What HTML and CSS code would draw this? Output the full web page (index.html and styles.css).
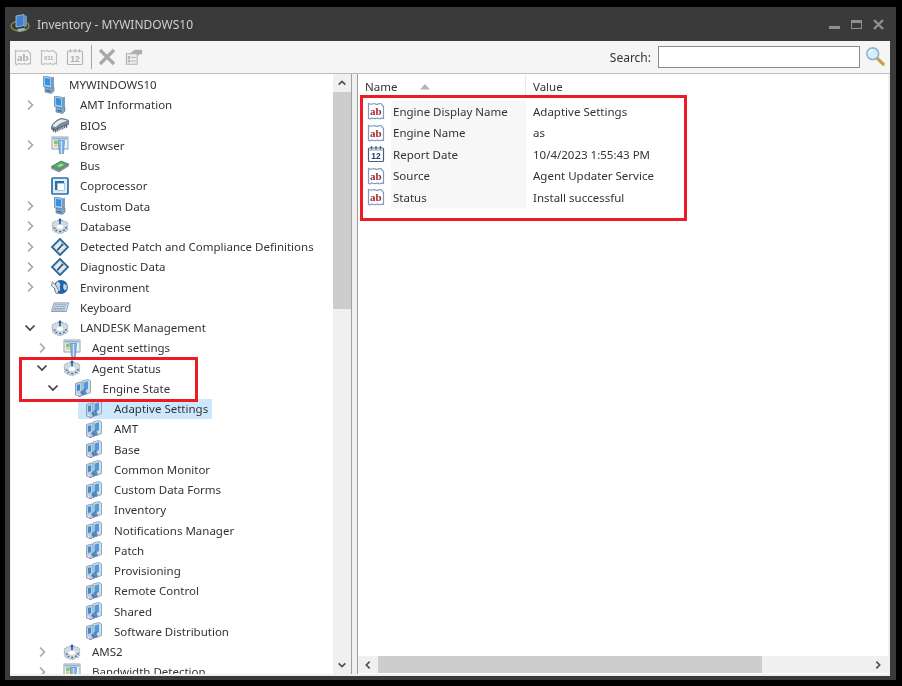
FILE: index.html
```html
<!DOCTYPE html>
<html lang="en">
<head>
<meta charset="utf-8">
<title>Inventory - MYWINDOWS10</title>
<link rel="stylesheet" href="styles.css">
</head>
<body>
<svg class="defs" width="0" height="0" aria-hidden="true">
  <defs>
    <symbol id="i-ab" viewBox="0 0 18 18">
      <path d="M1.500 1.500c2 1 3.500 1 5.500 0 2 1 4 1 5.500 0l1.500 0 2.500 3v12l-1.500-.5c-1.500 1-3 1-4.500 0-2 1-3.500 1-5.500 0-1.500 1-2.500 1-3.500.5z" fill="#fff" stroke="#7f9cc0" stroke-width="1.200"/>
      <text x="8.800" y="12.600" text-anchor="middle" class="ab">ab</text>
    </symbol>
    <symbol id="i-ab-off" viewBox="0 0 18 18">
      <path d="M1.500 2.500c2 1 3.500 1 5.500 0 2 1 4 1 5.500 0l1 0 3 3v10.500l-1.500-.5c-1.500 1-3 1-4.500 0-2 1-3.500 1-5.500 0-1.500 1-2.500 1-3.500.5z" fill="#f4f4f4" stroke="#bdbdbd" stroke-width="1.200"/>
      <text x="8.800" y="12.800" text-anchor="middle" class="ab off">ab</text>
    </symbol>
    <symbol id="i-bin-off" viewBox="0 0 18 18">
      <path d="M1.500 2.500c2 1 3.500 1 5.500 0 2 1 4 1 5.500 0l1 0 3 3v10.500l-1.500-.5c-1.500 1-3 1-4.500 0-2 1-3.500 1-5.500 0-1.500 1-2.500 1-3.500.5z" fill="#f4f4f4" stroke="#bdbdbd" stroke-width="1.200"/>
      <text x="8.800" y="11.500" text-anchor="middle" class="bin">011</text>
    </symbol>
    <symbol id="i-date" viewBox="0 0 18 18">
      <rect x="1.500" y="3" width="15" height="13.500" rx="1" fill="#fff" stroke="#4d6078" stroke-width="1.200"/>
      <rect x="2" y="3.500" width="14" height="2.500" fill="#c3d0de"/>
      <path d="M4.500 1v3.500M9 1v3.500M13.500 1v3.500" stroke="#4d6078" stroke-width="1.300" fill="none"/>
      <text x="9" y="14" text-anchor="middle" class="date">12</text>
    </symbol>
    <symbol id="i-date-off" viewBox="0 0 18 18">
      <rect x="1.500" y="3" width="15" height="13.500" rx="1" fill="#f4f4f4" stroke="#b5b5b5" stroke-width="1.200"/>
      <path d="M4.500 1v3.500M9 1v3.500M13.500 1v3.500" stroke="#b5b5b5" stroke-width="1.300" fill="none"/>
      <text x="9" y="14" text-anchor="middle" class="date off">12</text>
    </symbol>
    <symbol id="i-computer" viewBox="0 0 18 18">
      <path d="M3.500 0l8 1.500v10.500l-8-1.500z" fill="#b8d2ec" stroke="#5a82aa" stroke-width=".8"/>
      <path d="M4.800 1.800l5.400 1v7l-5.400-1z" fill="#2f94e6"/>
      <path d="M11.500 1.500l2.500-.8v10.500l-2.500 .8z" fill="#7b9dbf"/>
      <path d="M5 11l6.500 1.500 2.500-1.200v3.700l-2.500 2.500-6.500-1.500z" fill="#7fa6cc" stroke="#4e7398" stroke-width=".6"/>
      <path d="M6.500 14.500l4 .8" stroke="#1c4f80" stroke-width="1"/>
    </symbol>
    <symbol id="i-chip" viewBox="0 0 19 18">
      <path d="M.5 10.500c1.500-3.500 6-7.500 11-8.500l7 2v4.500c-5 1-11 3.500-13.500 6l-4.500-1z" fill="#7f8e9c" stroke="#4c5c6c" stroke-width=".7"/>
      <path d="M1.500 10c2-3 6-6 10-7l6 1.500c-5 1-10 3.500-12.500 6.500z" fill="#e6ecf2"/>
      <path d="M2.500 12.500v3.500M4.500 13.500v3.500M6.500 12.500v3.500M8.500 11.500v3.500M10.500 10.500v3.500M12.500 10v3.500M14.500 9v3.500M16.500 8.500v3.500" stroke="#3c4a58" stroke-width="1.100"/>
    </symbol>
    <symbol id="i-browser" viewBox="0 0 18 18">
      <rect x="1" y="1" width="16" height="12" fill="#e9f1f8" stroke="#8aa4be"/>
      <rect x="2" y="2" width="14" height="1.500" fill="#8fb0cf"/>
      <rect x="3" y="4.500" width="3.500" height="3.500" fill="#8cc45f"/>
      <rect x="3" y="8.500" width="3.500" height="2" fill="#e4c95a"/>
      <path d="M7 4.500h6.500l-1 13h-4z" fill="#7fb2e0" stroke="#4f7ea9" stroke-width=".6"/>
      <path d="M10.500 5v12.500" stroke="#d4e6f5" stroke-width="1.200"/>
    </symbol>
    <symbol id="i-bus" viewBox="0 0 18 18">
      <path d="M.5 9.500l9.500-5.500 7.500 3-9.500 6z" fill="#58a860" stroke="#3c6d45" stroke-width=".7"/>
      <path d="M.5 9.500v2l7.500 3.500 9.500-6v-2l-9.500 6z" fill="#8a98a3" stroke="#56626b" stroke-width=".5"/>
      <path d="M6 8.800l4-2.300 3 1.200-4 2.400z" fill="#a8d8a0"/>
    </symbol>
    <symbol id="i-coproc" viewBox="0 0 18 18">
      <rect x="1" y="1" width="16" height="16" rx="1" fill="#dfebf7" stroke="#2c6ea8" stroke-width="1.700"/>
      <path d="M13 5H5v8" fill="none" stroke="#2c6ea8" stroke-width="2"/>
      <rect x="6.500" y="6.500" width="7" height="7" fill="#fff" stroke="#8fb3d3" stroke-width=".7"/>
    </symbol>
    <symbol id="i-gear" viewBox="0 0 20 18">
      <path d="M2 9.500c-2-3 1-6.500 4.500-6 2-2.500 5-2.500 7 0 3.500-.5 6.500 3 4.500 6 1.500 3-1 6.500-4 6-2 2.500-6 2.500-8 0-3 .5-5.500-3-4-6z" fill="#d3dae1" stroke="#a9b4bf" stroke-width="1.300" stroke-dasharray="2.200 1"/>
      <path d="M10 1v6" stroke="#2f6aa6" stroke-width="2"/>
      <path d="M8.200 3.500L10 .5l1.800 3z" fill="#1f5a94"/>
      <ellipse cx="10" cy="9.800" rx="3.500" ry="2.200" fill="#fff"/>
      <path d="M3 11.500h2M5 14h2M9 15h2.500M13.500 13.800h2M15.500 11h2" stroke="#3f73a8" stroke-width="1.700"/>
    </symbol>
    <symbol id="i-diamond" viewBox="0 0 20 20">
      <path d="M10 1l9 9-9 9-9-9z" fill="#b9d3ea" stroke="#27608f" stroke-width="1.900"/>
      <path d="M10 3.800l6.200 6.200-6.200 6.200-6.200-6.200z" fill="#dcebf7"/>
      <path d="M7 13.500l5.500-6" stroke="#2f3d4c" stroke-width="1.700"/>
      <circle cx="12.500" cy="7.500" r="1.500" fill="#55697e"/>
    </symbol>
    <symbol id="i-globe" viewBox="0 0 20 18">
      <circle cx="11" cy="9" r="7.800" fill="#1f64ad"/>
      <path d="M7 3c3 1 4 3 3 5s1 3 0 5c-1 1-3 1-4 0-2-3-1-7 1-10zM14 5l3.500 2 0 4-2 2-2-3z" fill="#c8d6e2"/>
      <path d="M1.500 3.500l4 3.500 3 6-1.500 3.500-2-1-1-5-3.500-3z" fill="#e4e9ee" stroke="#55626e" stroke-width=".8"/>
    </symbol>
    <symbol id="i-keyboard" viewBox="0 0 24 14">
      <path d="M4 1.500h19.500l-3 11.500H.5z" fill="#d4e0ec" stroke="#6f89a4"/>
      <path d="M5 4h15.500M4.300 6.500h15.500M3.600 9h15.500M3 11h15" stroke="#55779a" stroke-width="1.100" stroke-dasharray="1.300 .7"/>
    </symbol>
    <symbol id="i-server" viewBox="0 0 18 18">
      <path d="M1.500 4.500l5-1.500 2 1v12l-3 1.500-4-1.500z" fill="#bcd0e4" stroke="#6b8aa8" stroke-width=".7"/>
      <path d="M8 2l6-1.500 2.500 1.500v11.500l-5 2-3.500-1.500z" fill="#d3e0ec" stroke="#6b8aa8" stroke-width=".7"/>
      <path d="M9.500 3.500l4.500-1.300v8l-4.500 1.300z" fill="#4f99dc"/>
      <path d="M3 6l3-.8v6l-3 .8z" fill="#3f8bd0"/>
      <path d="M6 13l5-3.500 2 5-4.500 2.500z" fill="#2c6aa6" opacity=".7"/>
      <path d="M3 14.500l1 1.500" stroke="#fff" stroke-width="1"/>
      <path d="M4.500 17.500h2.500" stroke="#ea5bd6" stroke-width="1"/>
    </symbol>
    <symbol id="i-app" viewBox="0 0 22 22">
      <ellipse cx="10" cy="13" rx="9" ry="5" fill="none" stroke="#7c8f3c" stroke-width="1.500"/>
      <path d="M6 3l8-1.500v11l-8 1.500z" fill="#3f82cc" stroke="#a8c4e0" stroke-width=".8"/>
      <path d="M14 2l3 1v10l-3 1.500z" fill="#6f90af"/>
      <path d="M7 16l7-1 2 1.500-7 2.500z" fill="#9db6d0"/>
    </symbol>
    <symbol id="i-props" viewBox="0 0 20 18">
      <rect x="1.500" y="5.500" width="12" height="11.500" fill="#efefef" stroke="#a5a5a5"/>
      <path d="M3.500 8.500h2v2h-2zM3.500 12.500h2v2h-2zM7 9.500h5M7 13.500h5" stroke="#a5a5a5" fill="none"/>
      <path d="M5 5l6-4h8v5h-3l-2 2-1-3z" fill="#adadad"/>
    </symbol>
    <symbol id="i-search" viewBox="0 0 22 22">
      <path d="M13 13l7 7" stroke="#c9a23e" stroke-width="3.500" stroke-linecap="round"/>
      <circle cx="8.500" cy="8.500" r="6.500" fill="#d7ecfa" stroke="#8fb5d1" stroke-width="1.800"/>
      <path d="M4.500 7.500a4 4 0 0 1 4-3" fill="none" stroke="#fff" stroke-width="1.500"/>
    </symbol>
    <symbol id="c-right" viewBox="0 0 12 12"><path d="M4 1.500L8.500 6 4 10.500" fill="none" stroke="#a6a6a6" stroke-width="1.600"/></symbol>
    <symbol id="c-down" viewBox="0 0 12 12"><path d="M1.500 3.500L6 8l4.500-4.500" fill="none" stroke="#404040" stroke-width="1.700"/></symbol>
  </defs>
</svg>

<div class="window">
  <header class="titlebar">
    <svg class="app-icon"><use href="#i-app"/></svg>
    <span class="title">Inventory - MYWINDOWS10</span>
    <div class="caption">
      <span class="cap-min"></span>
      <span class="cap-max"></span>
      <svg class="cap-close" viewBox="0 0 11 11"><path d="M1 1l9 9M10 1l-9 9" stroke="#8f8f8f" stroke-width="2.400"/></svg>
    </div>
  </header>

  <div class="client">
    <div class="toolbar">
      <svg class="tool"><use href="#i-ab-off"/></svg>
      <svg class="tool"><use href="#i-bin-off"/></svg>
      <svg class="tool"><use href="#i-date-off"/></svg>
      <span class="tool-sep"></span>
      <svg class="tool-x" viewBox="0 0 18 18"><path d="M2 2l14 14M16 2L2 16" stroke="#a8a8a8" stroke-width="3.200"/></svg>
      <svg class="tool"><use href="#i-props"/></svg>
      <div class="search">
        <label class="search-label" for="q">Search:</label>
        <input class="search-input" id="q" type="text">
        <svg class="search-icon"><use href="#i-search"/></svg>
      </div>
    </div>

    <div class="panes">
      <div class="tree-pane">
        <div class="tree">
          <div class="row l0"><span class="chev"></span><span class="node"><svg class="ico"><use href="#i-computer"/></svg><span>MYWINDOWS10</span></span></div>
          <div class="row l1"><svg class="chev"><use href="#c-right"/></svg><span class="node"><svg class="ico"><use href="#i-computer"/></svg><span>AMT Information</span></span></div>
          <div class="row l1"><span class="chev"></span><span class="node"><svg class="ico"><use href="#i-chip"/></svg><span>BIOS</span></span></div>
          <div class="row l1"><svg class="chev"><use href="#c-right"/></svg><span class="node"><svg class="ico"><use href="#i-browser"/></svg><span>Browser</span></span></div>
          <div class="row l1"><span class="chev"></span><span class="node"><svg class="ico"><use href="#i-bus"/></svg><span>Bus</span></span></div>
          <div class="row l1"><span class="chev"></span><span class="node"><svg class="ico"><use href="#i-coproc"/></svg><span>Coprocessor</span></span></div>
          <div class="row l1"><svg class="chev"><use href="#c-right"/></svg><span class="node"><svg class="ico"><use href="#i-computer"/></svg><span>Custom Data</span></span></div>
          <div class="row l1"><svg class="chev"><use href="#c-right"/></svg><span class="node"><svg class="ico"><use href="#i-gear"/></svg><span>Database</span></span></div>
          <div class="row l1"><svg class="chev"><use href="#c-right"/></svg><span class="node"><svg class="ico"><use href="#i-diamond"/></svg><span>Detected Patch and Compliance Definitions</span></span></div>
          <div class="row l1"><svg class="chev"><use href="#c-right"/></svg><span class="node"><svg class="ico"><use href="#i-diamond"/></svg><span>Diagnostic Data</span></span></div>
          <div class="row l1"><svg class="chev"><use href="#c-right"/></svg><span class="node"><svg class="ico"><use href="#i-globe"/></svg><span>Environment</span></span></div>
          <div class="row l1"><span class="chev"></span><span class="node"><svg class="ico"><use href="#i-keyboard"/></svg><span>Keyboard</span></span></div>
          <div class="row l1"><svg class="chev"><use href="#c-down"/></svg><span class="node"><svg class="ico"><use href="#i-gear"/></svg><span>LANDESK Management</span></span></div>
          <div class="row l2"><svg class="chev"><use href="#c-right"/></svg><span class="node"><svg class="ico"><use href="#i-browser"/></svg><span>Agent settings</span></span></div>
          <div class="row l2"><svg class="chev"><use href="#c-down"/></svg><span class="node"><svg class="ico"><use href="#i-gear"/></svg><span>Agent Status</span></span></div>
          <div class="row l3"><svg class="chev"><use href="#c-down"/></svg><span class="node"><svg class="ico"><use href="#i-server"/></svg><span>Engine State</span></span></div>
          <div class="row l4"><span class="chev"></span><span class="node selected"><svg class="ico"><use href="#i-server"/></svg><span>Adaptive Settings</span></span></div>
          <div class="row l4"><span class="chev"></span><span class="node"><svg class="ico"><use href="#i-server"/></svg><span>AMT</span></span></div>
          <div class="row l4"><span class="chev"></span><span class="node"><svg class="ico"><use href="#i-server"/></svg><span>Base</span></span></div>
          <div class="row l4"><span class="chev"></span><span class="node"><svg class="ico"><use href="#i-server"/></svg><span>Common Monitor</span></span></div>
          <div class="row l4"><span class="chev"></span><span class="node"><svg class="ico"><use href="#i-server"/></svg><span>Custom Data Forms</span></span></div>
          <div class="row l4"><span class="chev"></span><span class="node"><svg class="ico"><use href="#i-server"/></svg><span>Inventory</span></span></div>
          <div class="row l4"><span class="chev"></span><span class="node"><svg class="ico"><use href="#i-server"/></svg><span>Notifications Manager</span></span></div>
          <div class="row l4"><span class="chev"></span><span class="node"><svg class="ico"><use href="#i-server"/></svg><span>Patch</span></span></div>
          <div class="row l4"><span class="chev"></span><span class="node"><svg class="ico"><use href="#i-server"/></svg><span>Provisioning</span></span></div>
          <div class="row l4"><span class="chev"></span><span class="node"><svg class="ico"><use href="#i-server"/></svg><span>Remote Control</span></span></div>
          <div class="row l4"><span class="chev"></span><span class="node"><svg class="ico"><use href="#i-server"/></svg><span>Shared</span></span></div>
          <div class="row l4"><span class="chev"></span><span class="node"><svg class="ico"><use href="#i-server"/></svg><span>Software Distribution</span></span></div>
          <div class="row l2"><svg class="chev"><use href="#c-right"/></svg><span class="node"><svg class="ico"><use href="#i-gear"/></svg><span>AMS2</span></span></div>
          <div class="row l2"><svg class="chev"><use href="#c-right"/></svg><span class="node"><svg class="ico"><use href="#i-browser"/></svg><span>Bandwidth Detection</span></span></div>
        </div>
        <div class="vscroll">
          <span class="sb-arrow">
            <svg class="sb-glyph" viewBox="0 0 12 12"><path d="M2 8l4-4 4 4" fill="none" stroke="#505050" stroke-width="2"/></svg>
          </span>
          <span class="vthumb"></span>
          <span class="vrest"></span>
          <span class="sb-arrow">
            <svg class="sb-glyph" viewBox="0 0 12 12"><path d="M2 4l4 4 4-4" fill="none" stroke="#505050" stroke-width="2"/></svg>
          </span>
        </div>
      </div>

      <div class="list-pane">
        <div class="list-body">
          <div class="list-head">
            <div class="col-name">Name<svg class="sort" viewBox="0 0 12 7"><path d="M1 6.500L6 1l5 5.500z" fill="#b5b5b5"/></svg></div>
            <div class="col-value">Value</div>
          </div>
          <div class="list-row"><svg class="ico-l"><use href="#i-ab"/></svg><span class="cell-name">Engine Display Name</span><span class="cell-value">Adaptive Settings</span></div>
          <div class="list-row"><svg class="ico-l"><use href="#i-ab"/></svg><span class="cell-name">Engine Name</span><span class="cell-value">as</span></div>
          <div class="list-row"><svg class="ico-l"><use href="#i-date"/></svg><span class="cell-name">Report Date</span><span class="cell-value">10/4/2023 1:55:43 PM</span></div>
          <div class="list-row"><svg class="ico-l"><use href="#i-ab"/></svg><span class="cell-name">Source</span><span class="cell-value">Agent Updater Service</span></div>
          <div class="list-row"><svg class="ico-l"><use href="#i-ab"/></svg><span class="cell-name">Status</span><span class="cell-value">Install successful</span></div>
        </div>
        <div class="hscroll">
          <span class="sb-arrow-h">
            <svg class="sb-glyph" viewBox="0 0 12 12"><path d="M8 2L4 6l4 4" fill="none" stroke="#505050" stroke-width="2"/></svg>
          </span>
          <span class="hthumb"></span>
          <span class="hrest"></span>
          <span class="sb-arrow-h">
            <svg class="sb-glyph" viewBox="0 0 12 12"><path d="M4 2l4 4-4 4" fill="none" stroke="#505050" stroke-width="2"/></svg>
          </span>
        </div>
      </div>
    </div>
  </div>
</div>

<div class="callout callout-tree"></div>
<div class="callout callout-list"></div>
</body>
</html>
```

FILE: styles.css
```css
* { box-sizing: border-box; }

html, body {
  margin: 0;
  height: 100%;
  background: #000;
  overflow: hidden;
}

body {
  position: relative;
  padding: 7px 6px 6px 5px;
  font-family: "Noto Sans", "Open Sans", sans-serif;
  font-size: 11.500px;
  color: #333;
}

.defs { position: absolute; }

.window {
  display: flex;
  flex-direction: column;
  height: 673px;
  background: #3a3a3a;
  filter: blur(0.5px);
}

.titlebar {
  display: flex;
  align-items: center;
  height: 34px;
  flex: none;
  padding: 0 12px 0 5px;
  color: #cfcfcf;
}

.app-icon { width: 22px; height: 22px; flex: none; margin-right: 5px; }
.title { flex: 1; font-size: 12px; }

.caption { display: flex; align-items: center; gap: 11px; }
.cap-min { width: 11px; height: 3px; margin-top: 6px; background: #8f8f8f; }
.cap-max { width: 11px; height: 9px; border: 1px solid #8f8f8f; border-top-width: 3px; }
.cap-close { width: 11px; height: 11px; }

.client {
  flex: 1;
  display: flex;
  flex-direction: column;
  margin: 0 6px 4px 5px;
  background: #f0f0f0;
  min-height: 0;
}

.toolbar {
  display: flex;
  align-items: center;
  flex: none;
  height: 33px;
  padding: 0 5px 0 4px;
  border-bottom: 1px solid #bcbcbc;
  background: #f5f5f5;
}

.tool { width: 18px; height: 18px; flex: none; margin-right: 8px; }
.tool-sep { width: 1px; height: 24px; margin: 0 6px 0 -1px; background: #a5a5a5; }
.tool-x { width: 18px; height: 18px; margin-right: 9px; }

.search { display: flex; align-items: center; margin-left: auto; }
.search-label { margin-right: 7px; font-size: 12px; }
.search-input {
  width: 202px;
  height: 22px;
  border: 1px solid #8a8a8a;
  background: #fff;
  margin-right: 5px;
}
.search-icon { width: 20px; height: 20px; margin-top: -2px; }

.ab { font: 700 11px "Liberation Serif", serif; fill: #a02a34; }
.ab.off { fill: #aeaeae; }
.bin { font: 700 5.500px "Liberation Sans", sans-serif; fill: #a8a8a8; }
.date { font: 700 8.500px "Liberation Sans", sans-serif; fill: #1f3f66; }
.date.off { fill: #aeaeae; }

.panes { flex: 1; display: flex; min-height: 0; padding: 0 2px 2px 1px; }

.tree-pane {
  display: flex;
  width: 340px;
  flex: none;
  background: #fff;
  margin-right: 7px;
  box-shadow: 1px 0 0 #a0a0a0;
}

.tree { flex: 1; min-width: 0; overflow: hidden; padding-top: .5px; background: #fff; }

.row { display: flex; align-items: center; height: 20.260px; white-space: nowrap; }
.l0 { padding-left: 0; }
.l1 { padding-left: 11px; }
.l2 { padding-left: 23px; }
.l3 { padding-left: 33.500px; }
.l4 { padding-left: 45px; }

.chev { width: 16px; height: 12px; flex: none; margin-right: 7px; }
.node { display: flex; align-items: center; height: 20px; padding: 0 4px 0 6px; }
.selected { background: #cce8ff; margin-left: -1px; padding-left: 7px; }
.ico { width: 18px; height: 18px; flex: none; margin-right: 11px; }

.vscroll { display: flex; flex-direction: column; width: 18px; flex: none; background: #f0f0f0; }
.sb-arrow { display: flex; align-items: center; justify-content: center; height: 18px; flex: none; }
.sb-glyph { width: 10px; height: 10px; }
.vthumb { height: 217px; flex: none; background: #cdcdcd; }
.vrest { flex: 1; }

.list-pane {
  flex: 1;
  min-width: 0;
  display: flex;
  flex-direction: column;
  background: #fff;
  box-shadow: -1px 0 0 #a0a0a0;
}

.list-body { flex: 1; min-height: 0; }

.list-head { display: flex; height: 23px; align-items: flex-start; padding-top: 1px; }
.col-name { width: 168px; height: 22px; display: flex; align-items: center; padding: 0 0 0 7px; border-right: 1px solid #e8e8e8; }
.col-value { padding: 0 0 0 7px; height: 22px; display: flex; align-items: center; }
.sort { width: 12px; height: 7px; margin-left: 22px; }

.list-head + .list-row { margin-top: 3.800px; }
.list-row { display: flex; align-items: center; height: 21.400px; }
.ico-l { width: 18px; height: 18px; flex: none; margin: 0 6px 0 9px; }
.cell-name { width: 135px; height: 100%; display: flex; align-items: center; padding-left: 2px; background: #f7f7f7; }
.cell-value { padding-left: 7px; }

.hscroll { display: flex; flex: none; height: 17px; background: #f0f0f0; margin-bottom: 1px; }
.sb-arrow-h { display: flex; align-items: center; justify-content: center; width: 20px; flex: none; }
.hthumb { width: 384px; flex: none; background: #cdcdcd; }
.hrest { flex: 1; }

.callout { position: absolute; border: 3px solid #ed1c24; }
.callout-tree { left: 19px; top: 357px; width: 179px; height: 45px; }
.callout-list { left: 360px; top: 95px; width: 327px; height: 126px; }
```
